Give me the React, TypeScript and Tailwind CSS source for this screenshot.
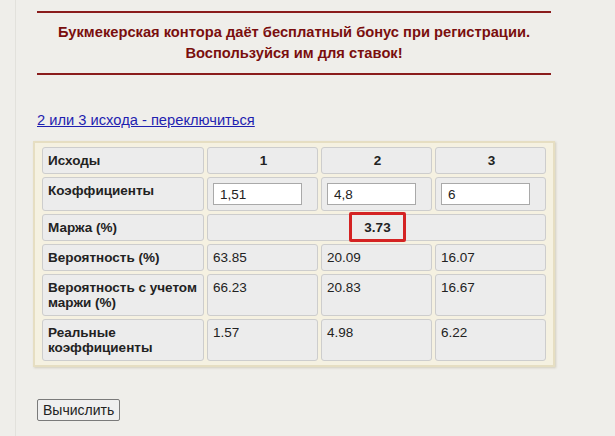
const font = { fontFamily: '"Liberation Sans", Arial, sans-serif' };

const cell =
  "bg-[#ececec] border border-[#cdcdcd] rounded-[3px] pl-[5px] pr-[3px] py-[5px] align-top text-[13.5px] leading-[15px] text-[#222]";

const rows = [
  { label: "Вероятность (%)", values: ["63.85", "20.09", "16.07"] },
  { label: "Вероятность с учетом маржи (%)", values: ["66.23", "20.83", "16.67"] },
  { label: "Реальные коэффициенты", values: ["1.57", "4.98", "6.22"] },
];

export default function App() {
  return (
    <div className="min-h-screen w-full bg-[#efeeea]" style={font}>
      <div className="ml-[15px] min-h-screen border-l border-[#e2e1dc] pl-[17px] pt-[11px] pb-4">
        <div className="ml-1 w-[514px]">
          <div className="h-[2px] bg-[#8a1c1c]" />
          <div className="pt-[9px] pb-[9px] text-center text-[14.7px] font-bold leading-[21px] text-[#7a0e0e]">
            <div>Букмекерская контора даёт бесплатный бонус при регистрации.</div>
            <div>Воспользуйся им для ставок!</div>
          </div>
          <div className="h-[2px] bg-[#8a1c1c]" />
        </div>

        <div className="ml-1 mt-[37px] text-[14.7px] leading-4">
          <a href="#" className="text-[#1f1fb0] underline">
            2 или 3 исхода - переключиться
          </a>
        </div>

        <div className="mt-[13px] w-[522px] border-2 border-[#e6dec2] bg-[#f5f1e1] p-[4px] shadow-[1px_1px_2px_rgba(160,150,110,0.35)]">
          <table className="w-[510px] border-separate border-spacing-[3px] -my-[3px]">
            <tbody>
              <tr>
                <td className={cell + " w-[162px] font-bold"}>Исходы</td>
                <td className={cell + " w-[111px] text-center font-bold"}>1</td>
                <td className={cell + " w-[111px] text-center font-bold"}>2</td>
                <td className={cell + " w-[111px] text-center font-bold"}>3</td>
              </tr>
              <tr>
                <td className={cell + " font-bold"}>Коэффициенты</td>
                {["1,51", "4,8", "6"].map((v) => (
                  <td key={v} className={cell}>
                    <input
                      readOnly
                      value={v}
                      className="block h-[22px] w-[89px] border border-[#a9a9a9] bg-white px-[6px] text-[13.5px] text-[#222] outline-none"
                      style={font}
                    />
                  </td>
                ))}
              </tr>
              <tr>
                <td className={cell + " font-bold"}>Маржа (%)</td>
                <td colSpan={3} className={cell + " text-center font-bold"}>
                  <span className="relative inline-block leading-[15px]">
                    3.73
                    <span className="absolute -left-[15px] -right-[15px] -top-[8px] -bottom-[7px] border-[3px] border-[#d42323] rounded-[2px]" />
                  </span>
                </td>
              </tr>
              {rows.map((r) => (
                <tr key={r.label}>
                  <td className={cell + " font-bold"}>{r.label}</td>
                  {r.values.map((v, i) => (
                    <td key={i} className={cell}>
                      {v}
                    </td>
                  ))}
                </tr>
              ))}
            </tbody>
          </table>
        </div>

        <button className="ml-1 mt-[32px] block h-[22px] rounded-[2px] border border-[#7a7a7a] bg-[#efefef] px-[5px] text-[14px] leading-4 text-[#222]">
          Вычислить
        </button>
      </div>
    </div>
  );
}
